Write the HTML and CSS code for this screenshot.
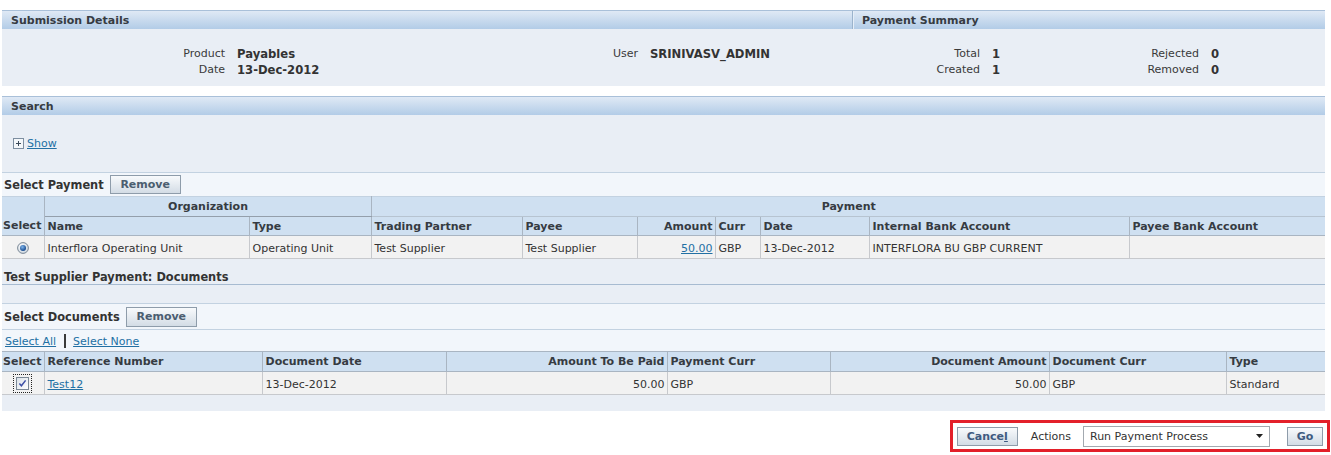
FILE: index.html
```html
<!DOCTYPE html>
<html>
<head>
<meta charset="utf-8">
<title>Payment Process</title>
<link rel="stylesheet" href="styles.css">
</head>
<body>
<div class="page">
  <div class="top">
    <section class="sec sec-sub">
      <div class="bar">Submission Details</div>
      <div class="info info-sub">
        <span class="lbl">Product</span><span class="val">Payables</span><span class="lbl">User</span><span class="val">SRINIVASV_ADMIN</span>
        <span class="lbl">Date</span><span class="val">13-Dec-2012</span><span></span><span></span>
      </div>
    </section>
    <section class="sec sec-sum">
      <div class="bar bar-sum">Payment Summary</div>
      <div class="info info-sum">
        <span class="lbl">Total</span><span class="val">1</span><span class="lbl">Rejected</span><span class="val">0</span>
        <span class="lbl">Created</span><span class="val">1</span><span class="lbl">Removed</span><span class="val">0</span>
      </div>
    </section>
  </div>

  <div class="bar search-bar">Search</div>
  <div class="panel">
    <div class="show">
      <svg class="plus" width="11" height="11" viewBox="0 0 11 11"><rect x="0.5" y="0.5" width="10" height="10" fill="#f4f7fa" stroke="#7d8ea0"/><path d="M3 5.5h5M5.5 3v5" stroke="#3b4a5a" stroke-width="1"/></svg>
      <a class="link" href="#">Show</a>
    </div>

    <div class="block block1">
      <div class="toolbar tb1">
        <span class="tb-title">Select Payment</span>
        <button class="btn btn-remove1">Remove</button>
      </div>
      <table class="grid">
        <colgroup>
          <col style="width:42px"><col style="width:205px"><col style="width:122px"><col style="width:151px"><col style="width:115px"><col style="width:78px"><col style="width:45px"><col style="width:109px"><col style="width:260px"><col>
        </colgroup>
        <thead>
          <tr class="h1">
            <th rowspan="2" class="sel-h sel-span">Select</th>
            <th colspan="2" class="grp">Organization</th>
            <th colspan="7" class="grp grp-pay">Payment</th>
          </tr>
          <tr class="h2">
            <th>Name</th><th>Type</th><th>Trading Partner</th><th>Payee</th><th class="num">Amount</th><th>Curr</th><th>Date</th><th>Internal Bank Account</th><th>Payee Bank Account</th>
          </tr>
        </thead>
        <tbody>
          <tr class="row">
            <td class="sel">
              <svg width="12" height="12" viewBox="0 0 12 12"><defs><radialGradient id="rg" cx="40%" cy="35%" r="70%"><stop offset="0" stop-color="#ffffff"/><stop offset="1" stop-color="#c9d3dd"/></radialGradient><radialGradient id="dot" cx="40%" cy="35%" r="70%"><stop offset="0" stop-color="#7fb6ec"/><stop offset="1" stop-color="#0c3f86"/></radialGradient></defs><circle cx="6" cy="6" r="5.4" fill="url(#rg)" stroke="#7b8896"/><circle cx="6" cy="6" r="3" fill="url(#dot)"/></svg>
            </td>
            <td>Interflora Operating Unit</td><td>Operating Unit</td><td>Test Supplier</td><td>Test Supplier</td><td class="num"><a class="link" href="#">50.00</a></td><td>GBP</td><td>13-Dec-2012</td><td>INTERFLORA BU GBP CURRENT</td><td></td>
          </tr>
        </tbody>
      </table>
    </div>

    <div class="subhead">Test Supplier Payment: Documents</div>

    <div class="block block2">
      <div class="toolbar tb2">
        <span class="tb-title">Select Documents</span>
        <button class="btn btn-remove2">Remove</button>
      </div>
      <div class="selrow">
        <a class="link" href="#">Select All</a><span class="pipe"></span><a class="link" href="#">Select None</a>
      </div>
      <table class="grid">
        <colgroup>
          <col style="width:42px"><col style="width:218px"><col style="width:184px"><col style="width:221px"><col style="width:163px"><col style="width:219px"><col style="width:177px"><col>
        </colgroup>
        <thead>
          <tr class="h2 h2b">
            <th class="sel-h">Select</th><th>Reference Number</th><th>Document Date</th><th class="num">Amount To Be Paid</th><th>Payment Curr</th><th class="num">Document Amount</th><th>Document Curr</th><th>Type</th>
          </tr>
        </thead>
        <tbody>
          <tr class="row">
            <td class="sel">
              <span class="focus"><svg width="13" height="13" viewBox="0 0 13 13"><defs><linearGradient id="cb" x1="0" y1="0" x2="1" y2="1"><stop offset="0" stop-color="#d9e0e8"/><stop offset="1" stop-color="#ffffff"/></linearGradient></defs><rect x="0.5" y="0.5" width="12" height="12" fill="url(#cb)" stroke="#7a8795"/><path d="M3.4 6.6l2 2.2 4.2-5.4" fill="none" stroke="#3d4fa6" stroke-width="1.5"/></svg></span>
            </td>
            <td><a class="link" href="#">Test12</a></td><td>13-Dec-2012</td><td class="num">50.00</td><td>GBP</td><td class="num">50.00</td><td>GBP</td><td>Standard</td>
          </tr>
        </tbody>
      </table>
    </div>
  </div>

  <div class="actions-row">
    <div class="actions">
      <button class="btn btn-cancel">Cance<u>l</u></button>
      <span class="act-label">Actions</span>
      <div class="choice"><span>Run Payment Process</span><svg width="7" height="4" viewBox="0 0 7 4"><path d="M0 0h7L3.5 4z" fill="#222"/></svg></div>
      <button class="btn btn-go">Go</button>
    </div>
  </div>
</div>
</body>
</html>
```

FILE: styles.css
```css
* { box-sizing: border-box; }
html, body { margin: 0; padding: 0; background: #ffffff; }
body {
  font-family: "DejaVu Sans", Tahoma, Verdana, sans-serif;
  font-size: 11px;
  color: #333333;
}
.page { padding: 10px 6px 0 2px; }

/* header bars */
.bar {
  height: 19px;
  line-height: 19px;
  padding-left: 9px;
  font-weight: bold;
  color: #363b42;
  background: linear-gradient(#dfe9f5, #b2cce7);
  border-top: 1px solid #a9c0d9;
}
.top { display: flex; }
.sec-sub { width: 850px; }
.sec-sum { flex: 1; }
.bar-sum {
  padding-left: 9px;
  border-left: 1px solid #9bb3cc;
  box-shadow: inset 1px 0 0 #e5eef8;
}
.info {
  display: grid;
  column-gap: 12px;
  row-gap: 0;
  line-height: 16px;
  background: #e9eef5;
  padding: 17px 0 8px;
}
.info-sub { grid-template-columns: 223px 329px 60px auto; }
.info-sum { grid-template-columns: 128px 125px 70px auto; }
.lbl { text-align: right; color: #3a3a3a; }
.val { font-weight: bold; color: #333; font-size: 11.6px; }

.search-bar { margin-top: 10px; }
.panel {
  background: #e9eef5;
  padding-bottom: 16px;
}
.show {
  display: flex;
  align-items: center;
  gap: 3px;
  padding: 21px 0 0 11px;
  height: 35px;
}
.plus { display: block; }
.link { color: #2270a4; text-decoration: underline; }

.block1 { margin-top: 22px; }
.block2 { margin-top: 18px; }
.toolbar {
  display: flex;
  align-items: center;
  gap: 6px;
  padding-left: 2px;
  background: #f2f6fb;
  border-top: 1px solid #c3d2e1;
}
.tb1 { height: 24px; }
.tb2 { height: 26px; }
.tb-title { font-weight: bold; color: #333; font-size: 11.4px; }

.btn {
  font-family: inherit;
  font-size: 11px;
  font-weight: bold;
  color: #4b5d70;
  background: linear-gradient(#f8fafc, #d3dce5);
  border: 1px solid #8e9caa;
  border-radius: 0;
  padding: 0;
  height: 19px;
  line-height: 17px;
}
.btn-remove1 { width: 71px; }
.btn-remove2 { width: 71px; height: 20px; }

.selrow {
  display: flex;
  align-items: center;
  height: 22px;
  padding: 1px 0 0 3px;
  background: #f2f6fb;
  border-top: 1px solid #c3d2e1;
}
.pipe {
  display: inline-block;
  width: 2px;
  height: 14px;
  background: #3a3a3a;
  margin: 0 7px 0 8px;
}

.grid {
  width: 100%;
  table-layout: fixed;
  border-collapse: collapse;
}
.grid th {
  background: #cfe0f1;
  font-weight: bold;
  color: #363b42;
  text-align: left;
  padding: 0 2px 0 3px;
  border: 1px solid #a9b5c2;
  border-left: 0;
  white-space: nowrap;
  overflow: hidden;
}
.grid th:last-child { border-right: 0; }
.grid th.sel-h { padding: 0 1px; text-align: left; }
.grid th.sel-span { vertical-align: bottom; padding-bottom: 3px; }
.grid .h1 th { height: 20px; border-top: 1px solid #c3d2e1; }
.grid .h1 th.grp { text-align: center; border-bottom-color: #949fab; }
.grid .h1 th.grp-pay { border-bottom-color: #b7c4d1; }
.grid .h2 th { height: 19px; }
.grid .h2b th { height: 20px; }
.grid th.num, .grid td.num { text-align: right; padding-right: 2px; }
.grid td {
  background: #f2f2f2;
  height: 23px;
  padding: 2px 2px 0 3px;
  border: 1px solid #c7c9cd;
  border-left: 0;
  white-space: nowrap;
  overflow: hidden;
}
.grid td:last-child { border-right: 0; }
.grid td.sel { text-align: center; padding: 1px 0 0; }
.grid td.sel svg { display: block; margin: 0 auto; }
.focus {
  display: inline-block;
  padding: 2px;
  border: 1px dotted #222;
  vertical-align: middle;
}
.focus svg { display: block; }

.subhead {
  font-weight: bold;
  color: #333;
  font-size: 11.4px;
  padding: 11px 0 0 2px;
  height: 26px;
  line-height: 14px;
  border-bottom: 1px solid #a7bbd1;
}

/* bottom actions */
.actions-row {
  display: flex;
  justify-content: flex-end;
  margin-top: 9px;
  margin-right: -5px;
}
.actions {
  display: flex;
  align-items: center;
  border: 3px solid #e3202a;
  height: 32px;
  padding: 0 4px 0 4px;
}
.btn-cancel { width: 61px; height: 19px; color: #3e5a80; }
.btn-cancel u { text-decoration: underline; }
.act-label { margin: 0 12px 0 13px; color: #333; }
.choice {
  display: flex;
  align-items: center;
  justify-content: space-between;
  width: 187px;
  height: 21px;
  border: 1px solid #a3a9b0;
  background: #ffffff;
  padding: 0 6px 0 6px;
  color: #333;
}
.btn-go { width: 36px; height: 19px; margin-left: 17px; color: #3e5a80; }
```
